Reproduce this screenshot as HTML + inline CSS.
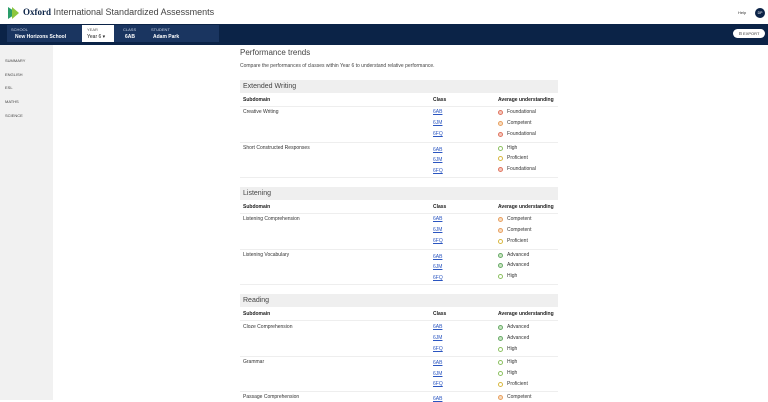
<!DOCTYPE html>
<html><head><meta charset="utf-8"><style>
*{margin:0;padding:0;box-sizing:border-box}
body{width:768px;height:400px;overflow:hidden;background:#fff;font-family:"Liberation Sans",sans-serif;color:#333;position:relative}
.a{position:absolute;white-space:nowrap}
.s{font-size:5px;line-height:6px}
.b{font-weight:bold;color:#222}
.l{color:#2a55c0;text-decoration:underline}
.d{position:absolute;width:5px;height:5px;border-radius:50%;border:1.3px solid}
.F{border-color:#e07560;background:#f5c7bd}
.C{border-color:#e8a060;background:#f7dcc0}
.P{border-color:#d8b840;background:#fff}
.H{border-color:#8cc060;background:#fff}
.A{border-color:#6aaa6a;background:#c8e6c0}
.hd{position:absolute;left:240px;width:318px;height:13px;background:#efefef;font-size:7px;line-height:13px;padding-left:3px;color:#444}
.ln{position:absolute;left:240px;width:318px;height:1px;background:#eee}
</style></head><body>
<div class="a" style="left:8px;top:7px;width:0;height:0;border-top:6px solid transparent;border-bottom:6px solid transparent;border-left:9px solid #2a9d6a"></div>
<div class="a" style="left:12px;top:7px;width:0;height:0;border-top:6px solid transparent;border-bottom:6px solid transparent;border-left:7px solid #8cc63f"></div>
<div class="a" style="left:23px;top:7px;font-size:9px;line-height:11px;color:#0b2347"><b style="font-family:'Liberation Serif',serif">Oxford</b> <span style="color:#444">International Standardized Assessments</span></div>
<div class="a s" style="left:738px;top:10px;color:#333;font-size:4px">Help</div>
<div class="a" style="left:755px;top:8px;width:10px;height:10px;border-radius:50%;background:#0b2347;color:#fff;font-size:3.5px;line-height:10px;text-align:center">DP</div>
<div class="a" style="left:0;top:24px;width:768px;height:21px;background:#0b2347"></div>
<div class="a" style="left:7px;top:25px;width:212px;height:17px;background:#1a3560"></div>
<div class="a" style="left:82px;top:25px;width:32px;height:17px;background:#fff"></div>
<div class="a s" style="left:11px;top:27px;color:#c8d0e0;font-size:4px">SCHOOL</div>
<div class="a s b" style="left:15px;top:34px;color:#fff">New Horizons School</div>
<div class="a s" style="left:87px;top:27px;color:#555;font-size:4px">YEAR</div>
<div class="a s" style="left:87px;top:34px;color:#222">Year 6 ▾</div>
<div class="a s" style="left:123px;top:27px;color:#c8d0e0;font-size:4px">CLASS</div>
<div class="a s b" style="left:125px;top:34px;color:#fff">6AB</div>
<div class="a s" style="left:151px;top:27px;color:#c8d0e0;font-size:4px">STUDENT</div>
<div class="a s b" style="left:153px;top:34px;color:#fff">Adam Park</div>
<div class="a" style="left:733px;top:29px;width:32px;height:9px;border-radius:5px;background:#fff;font-size:4px;line-height:9px;text-align:center;color:#333">⊟ EXPORT</div>
<div class="a" style="left:0;top:45px;width:53px;height:355px;background:#f1f1f1"></div>
<div class="a" style="left:5px;top:54px;font-size:4px;line-height:13.7px;color:#444">SUMMARY<br>ENGLISH<br>ESL<br>MATHS<br>SCIENCE</div>
<div class="a" style="left:240px;top:48px;font-size:8px;color:#444">Performance trends</div>
<div class="a s" style="left:240px;top:63px;color:#444">Compare the performances of classes within Year 6 to understand relative performance.</div>

<div class="hd" style="top:80px">Extended Writing</div>
<div class="a s b" style="left:243px;top:97px">Subdomain</div><div class="a s b" style="left:433px;top:97px">Class</div><div class="a s b" style="left:498px;top:97px">Average understanding</div>
<div class="ln" style="top:106px"></div>
<div class="a s" style="left:243px;top:109px">Creative Writing</div>
<div class="a s l" style="left:433px;top:109px">6AB</div><div class="a s l" style="left:433px;top:120px">6JM</div><div class="a s l" style="left:433px;top:131px">6FQ</div>
<div class="d F" style="left:498px;top:110px"></div><div class="a s" style="left:507px;top:109px">Foundational</div>
<div class="d C" style="left:498px;top:121px"></div><div class="a s" style="left:507px;top:120px">Competent</div>
<div class="d F" style="left:498px;top:132px"></div><div class="a s" style="left:507px;top:131px">Foundational</div>
<div class="ln" style="top:142px"></div>
<div class="a s" style="left:243px;top:145px">Short Constructed Responses</div>
<div class="a s l" style="left:433px;top:147px">6AB</div><div class="a s l" style="left:433px;top:157px">6JM</div><div class="a s l" style="left:433px;top:168px">6FQ</div>
<div class="d H" style="left:498px;top:146px"></div><div class="a s" style="left:507px;top:145px">High</div>
<div class="d P" style="left:498px;top:156px"></div><div class="a s" style="left:507px;top:155px">Proficient</div>
<div class="d F" style="left:498px;top:167px"></div><div class="a s" style="left:507px;top:166px">Foundational</div>
<div class="ln" style="top:177px"></div>

<div class="hd" style="top:187px">Listening</div>
<div class="a s b" style="left:243px;top:204px">Subdomain</div><div class="a s b" style="left:433px;top:204px">Class</div><div class="a s b" style="left:498px;top:204px">Average understanding</div>
<div class="ln" style="top:213px"></div>
<div class="a s" style="left:243px;top:216px">Listening Comprehension</div>
<div class="a s l" style="left:433px;top:216px">6AB</div><div class="a s l" style="left:433px;top:227px">6JM</div><div class="a s l" style="left:433px;top:238px">6FQ</div>
<div class="d C" style="left:498px;top:217px"></div><div class="a s" style="left:507px;top:216px">Competent</div>
<div class="d C" style="left:498px;top:228px"></div><div class="a s" style="left:507px;top:227px">Competent</div>
<div class="d P" style="left:498px;top:239px"></div><div class="a s" style="left:507px;top:238px">Proficient</div>
<div class="ln" style="top:249px"></div>
<div class="a s" style="left:243px;top:252px">Listening Vocabulary</div>
<div class="a s l" style="left:433px;top:254px">6AB</div><div class="a s l" style="left:433px;top:264px">6JM</div><div class="a s l" style="left:433px;top:275px">6FQ</div>
<div class="d A" style="left:498px;top:253px"></div><div class="a s" style="left:507px;top:252px">Advanced</div>
<div class="d A" style="left:498px;top:263px"></div><div class="a s" style="left:507px;top:262px">Advanced</div>
<div class="d H" style="left:498px;top:274px"></div><div class="a s" style="left:507px;top:273px">High</div>
<div class="ln" style="top:284px"></div>

<div class="hd" style="top:294px">Reading</div>
<div class="a s b" style="left:243px;top:311px">Subdomain</div><div class="a s b" style="left:433px;top:311px">Class</div><div class="a s b" style="left:498px;top:311px">Average understanding</div>
<div class="ln" style="top:320px"></div>
<div class="a s" style="left:243px;top:324px">Cloze Comprehension</div>
<div class="a s l" style="left:433px;top:324px">6AB</div><div class="a s l" style="left:433px;top:335px">6JM</div><div class="a s l" style="left:433px;top:346px">6FQ</div>
<div class="d A" style="left:498px;top:325px"></div><div class="a s" style="left:507px;top:324px">Advanced</div>
<div class="d A" style="left:498px;top:336px"></div><div class="a s" style="left:507px;top:335px">Advanced</div>
<div class="d H" style="left:498px;top:347px"></div><div class="a s" style="left:507px;top:346px">High</div>
<div class="ln" style="top:356px"></div>
<div class="a s" style="left:243px;top:359px">Grammar</div>
<div class="a s l" style="left:433px;top:360px">6AB</div><div class="a s l" style="left:433px;top:371px">6JM</div><div class="a s l" style="left:433px;top:381px">6FQ</div>
<div class="d H" style="left:498px;top:360px"></div><div class="a s" style="left:507px;top:359px">High</div>
<div class="d H" style="left:498px;top:371px"></div><div class="a s" style="left:507px;top:370px">High</div>
<div class="d P" style="left:498px;top:382px"></div><div class="a s" style="left:507px;top:381px">Proficient</div>
<div class="ln" style="top:391px"></div>
<div class="a s" style="left:243px;top:394px">Passage Comprehension</div>
<div class="a s l" style="left:433px;top:396px">6AB</div>
<div class="d C" style="left:498px;top:395px"></div><div class="a s" style="left:507px;top:394px">Competent</div>
</body></html>
